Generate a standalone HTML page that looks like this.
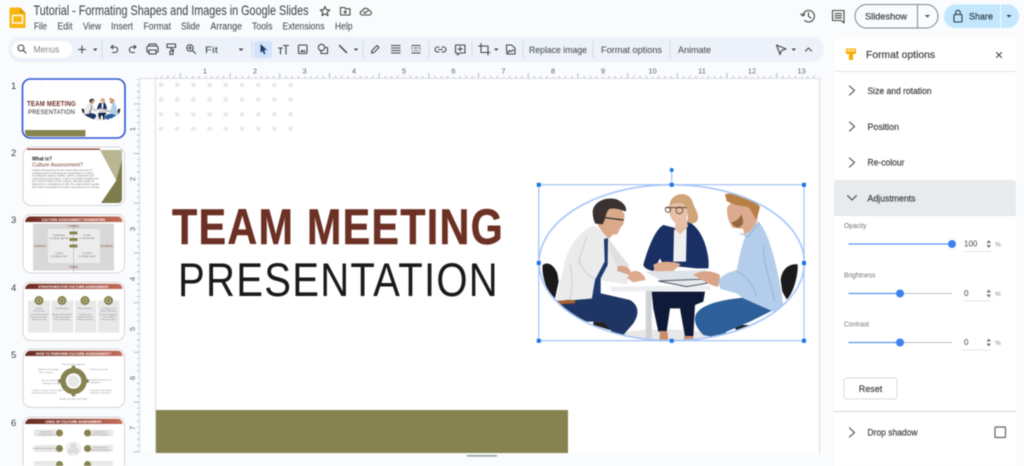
<!DOCTYPE html>
<html><head><meta charset="utf-8"><title>Tutorial - Formating Shapes and Images in Google Slides</title>
<style>
html,body{margin:0;padding:0;width:1024px;height:466px;overflow:hidden;background:#f9fbfd}
svg{display:block;font-family:"Liberation Sans",sans-serif;filter:blur(.4px)}
.t{fill:#3c4043}
.m{stroke:#3c4043;stroke-width:.18;fill:#3c4043}
.i{fill:none;stroke:#444746;stroke-width:1.1;stroke-linecap:round;stroke-linejoin:round}
.d{stroke:#d5d9df;stroke-width:1}
.ar{fill:#444746}
.s{font-size:2.5px;fill:#777}
</style></head><body>
<svg width="1024" height="466" viewBox="0 0 1024 466" xmlns="http://www.w3.org/2000/svg">
<defs>
<pattern id="ht" patternUnits="userSpaceOnUse" x="155.5" y="72" width="49.7" height="7">
<path d="M0 4V7M6.2 4V7M12.4 4V7M18.6 4V7M24.85 1V7M31 4V7M37.3 4V7M43.5 4V7" stroke="#9aa0a6" stroke-width=".7"/>
</pattern>
<pattern id="vt" patternUnits="userSpaceOnUse" x="133" y="79" width="7" height="49.7">
<path d="M4 0H7M4 6.2H7M4 12.4H7M4 18.6H7M1 24.85H7M4 31H7M4 37.3H7M4 43.5H7" stroke="#9aa0a6" stroke-width=".7"/>
</pattern>
<pattern id="dots" patternUnits="userSpaceOnUse" x="153" y="78" width="16.2" height="14.6"><circle cx="8" cy="7" r="2.4" fill="#e9e9e9"/></pattern>
<pattern id="dots2" patternUnits="userSpaceOnUse" x="27" y="80" width="3" height="3"><circle cx="1.5" cy="1.5" r=".5" fill="#eee"/></pattern>
<linearGradient id="hd"><stop offset="0" stop-color="#6b2b20"/><stop offset="1" stop-color="#c46f5c"/></linearGradient>
<clipPath id="ov"><ellipse cx="425" cy="293" rx="398" ry="234"/></clipPath>
<g id="people">
<g clip-path="url(#ov)">
<ellipse cx="400" cy="515" rx="150" ry="22" fill="#e8e8e8"/>
<!-- chairs -->
<path d="M38 300C50 290 70 295 82 325L86 350L75 400L55 380C42 350 35 320 38 300Z" fill="#1a1a1c"/>
<path d="M752 345C755 310 780 295 803 298C805 330 790 385 770 403L757 380Z" fill="#1a1a1c"/>
<path d="M190 470H240V495L190 480ZM610 480H680L620 498Z" fill="#222"/>
<!-- woman legs -->
<path d="M365 380L525 380L520 410L495 420L490 515L465 515L450 430L420 430L410 500L385 500L370 430Z" fill="#0f1a38"/>
<path d="M390 498L412 498L415 528L388 528ZM462 513L490 513L492 528L462 528Z" fill="#c98f6c"/>
<path d="M347 378H365V526H347Z" fill="#cfd2d5"/>
<!-- left man -->
<path d="M85 412C120 400 160 400 190 380L300 405C325 420 330 445 310 475L280 510L250 505L220 470L170 470C130 450 100 430 85 412Z" fill="#1f3563"/>
<path d="M80 407L135 405L135 415L82 418Z" fill="#a5622f"/>
<path d="M200 140C197 165 205 190 215 196L212 205L235 222L250 208L262 208C268 195 272 185 280 178L284 150L270 125Z" fill="#d9a98a"/>
<path d="M192 182C150 195 110 250 100 310L78 405L135 405L190 400L205 345L290 358L300 320L262 305L240 225L212 196Z" fill="#ebebec"/>
<path d="M238 222C255 250 285 285 300 305L265 312L240 260Z" fill="#e0e0e2"/>
<path d="M120 300C130 340 125 380 120 405M205 345C175 335 160 320 150 290M170 215C160 250 150 270 145 300" fill="none" stroke="#cfcfd1" stroke-width="3"/>
<path d="M222 222L234 219L233 300L212 340L212 395L185 405L195 345L224 290Z" fill="#1e3a6e"/>
<path d="M262 305C280 298 300 308 302 320L298 330L262 318Z" fill="#d8a488"/>
<path d="M298 325C320 305 345 330 347 345L310 352L292 340Z" fill="#dcab8f"/>
<path d="M188 140C190 112 225 94 260 103C282 112 292 128 287 140C270 132 250 128 238 132C228 138 228 160 218 178L196 176C190 165 188 150 188 140Z" fill="#3a3230"/>
<path d="M225 158L281 165" stroke="#2a2a2a" stroke-width="3.500" fill="none"/>
<!-- woman -->
<path d="M400 180C370 195 345 280 340 300C345 315 370 318 370 318L390 280L400 300L500 310L535 310C540 280 525 195 475 170L440 190Z" fill="#1a2f63"/>
<path d="M432 195L470 190L468 290L430 290Z" fill="#efefef"/>
<path d="M370 300C390 285 440 290 452 298L430 318L375 322Z" fill="#dcab8f"/>
<path d="M438 168L470 160L474 185L450 208L434 192Z" fill="#e6bfa6"/>
<path d="M416 122C414 150 430 180 452 180C470 172 478 140 472 112L430 108Z" fill="#e8c0a8"/>
<path d="M420 112C430 82 475 78 487 108C490 125 506 140 504 162C498 178 480 178 472 170C476 150 472 125 462 118C450 110 432 112 420 122Z" fill="#cfa478"/>
<path d="M406 128H470" stroke="#5a4032" stroke-width="3" fill="none"/><circle cx="414" cy="134" r="8" fill="none" stroke="#5a4032" stroke-width="2.500"/><circle cx="448" cy="136" r="10" fill="none" stroke="#5a4032" stroke-width="2.500"/>
<!-- table -->
<path d="M240 365L540 362L540 375L245 380Z" fill="#eceef0"/>
<path d="M345 320L530 315L500 340L400 350Z" fill="#dfe3ea"/>
<path d="M385 348L525 342L530 355L470 365Z" fill="#e6e8ec" stroke="#4c5262" stroke-width="3"/>
<!-- right man -->
<path d="M497 450C510 420 570 405 640 398L700 410L730 435L660 470L590 500L570 520L520 510C500 490 490 470 497 450Z" fill="#2d5f9a"/>
<path d="M655 195C640 215 625 290 620 315L590 325L562 345L572 372L620 385L640 400L730 440L760 425C750 340 720 200 685 170Z" fill="#b3cdea"/>
<path d="M620 320C650 330 670 360 680 395M700 240C700 290 720 350 735 410M630 205L655 215L688 172" fill="none" stroke="#96b4d8" stroke-width="3"/>
<path d="M490 330C510 315 545 315 570 330L565 365C545 365 510 340 490 330Z" fill="#d8a488"/>
<path d="M592 125C588 150 598 175 608 188L640 192L642 210L665 195L682 168L680 130L620 100Z" fill="#dcab8f"/>
<path d="M604 172C615 192 635 194 640 170L635 148C628 160 618 170 604 172Z" fill="#95693c"/>
<path d="M585 88C610 80 665 95 690 125L680 165C668 150 664 130 650 125C625 122 605 118 590 108Z" fill="#b98045"/>
</g></g>
</defs>

<rect width="1024" height="466" fill="#f9fbfd"/>

<!-- app header -->
<path d="M11 7.5H20L25.5 13V26.5Q25.5 28 24 28H11Q9.5 28 9.5 26.5V9Q9.5 7.5 11 7.5Z" fill="#f6b50f"/>
<path d="M20 7.5V13H25.5Z" fill="#d99a05"/>
<rect x="12.5" y="15.5" width="10" height="7.5" fill="none" stroke="#fff" stroke-width="1.4"/>
<text x="33.5" y="15" font-size="14" class="t" textLength="275" lengthAdjust="spacingAndGlyphs">Tutorial - Formating Shapes and Images in Google Slides</text>
<path class="i" d="M325 6.5L326.4 9.7L329.8 10L327.2 12.2L328 15.6L325 13.8L322 15.6L322.8 12.2L320.2 10L323.6 9.7Z"/>
<path class="i" d="M340.5 7.5H344.5L345.5 8.8H350V15H340.5ZM345.2 10.5V13.5M343.7 12H346.7" stroke-width=".9"/>
<path class="i" d="M362.5 15H369C372 15 372 11 369 10.7C368 7.5 363.5 7.5 362.8 10.5C359.5 10.7 359.5 15 362.5 15ZM363.5 12L365 13.3L367.5 10.8" stroke-width=".9"/>
<g font-size="10" class="t">
<text x="34" y="29.5" textLength="13" lengthAdjust="spacingAndGlyphs">File</text>
<text x="57.5" y="29.5" textLength="15" lengthAdjust="spacingAndGlyphs">Edit</text>
<text x="83" y="29.5" textLength="18" lengthAdjust="spacingAndGlyphs">View</text>
<text x="111" y="29.5" textLength="22" lengthAdjust="spacingAndGlyphs">Insert</text>
<text x="143.5" y="29.5" textLength="27.5" lengthAdjust="spacingAndGlyphs">Format</text>
<text x="181" y="29.5" textLength="19" lengthAdjust="spacingAndGlyphs">Slide</text>
<text x="210.5" y="29.5" textLength="31.5" lengthAdjust="spacingAndGlyphs">Arrange</text>
<text x="252" y="29.5" textLength="20.5" lengthAdjust="spacingAndGlyphs">Tools</text>
<text x="282.5" y="29.5" textLength="42" lengthAdjust="spacingAndGlyphs">Extensions</text>
<text x="335" y="29.5" textLength="17.5" lengthAdjust="spacingAndGlyphs">Help</text>
</g>

<!-- right header -->
<path class="i" d="M802.8 16A5.8 5.8 0 1 1 804.6 20.4M802.8 16L800.8 14M802.8 16L804.8 14.2M808.5 12.5V16.3L811 18" stroke-width="1.2"/>
<path class="i" d="M832.5 10.5H844V23L841 20.5H832.5ZM835 13.5H841.5M835 15.7H841.5M835 17.9H841.5" stroke-width="1.1"/>
<rect x="855" y="4.5" width="83" height="23.5" rx="11.7" fill="#f9fbfd" stroke="#80868b" stroke-width="1"/>
<path d="M917.5 4.5V28" stroke="#80868b"/>
<text x="865" y="19.5" font-size="9.5" class="m" textLength="42" lengthAdjust="spacingAndGlyphs">Slideshow</text>
<path class="ar" d="M925 15H930L927.5 17.5Z"/>
<rect x="944" y="4.5" width="75" height="23.5" rx="11.7" fill="#c2e7ff"/>
<path d="M1000.5 4.5V28" stroke="#f9fbfd"/>
<rect x="954" y="14.5" width="8" height="7.5" rx="1" fill="none" stroke="#2a3a44" stroke-width="1.1"/>
<path d="M955.8 14.5V12.5A2.2 2.2 0 0 1 960.2 12.5V14.5" fill="none" stroke="#2a3a44" stroke-width="1.1"/>
<text x="969" y="19.5" font-size="9.5" fill="#2a3a44" stroke="#2a3a44" stroke-width=".2" textLength="24" lengthAdjust="spacingAndGlyphs">Share</text>
<path d="M1006.5 15H1011.5L1009 17.5Z" fill="#2a3a44"/>

<!-- toolbar -->
<rect x="8" y="37" width="816" height="25" rx="12.5" fill="#edf2fa"/>
<rect x="12" y="41" width="60" height="17" rx="8.5" fill="#fff"/>
<circle cx="21" cy="48" r="3" class="i"/><path class="i" d="M23.3 50.3L26 53"/>
<text x="33.5" y="52.7" font-size="9" fill="#80868b" textLength="26" lengthAdjust="spacingAndGlyphs">Menus</text>
<path class="i" d="M82 46V53M78.500 49.500H85.500" stroke-width="1.300"/>
<path class="ar" d="M93 48.5H97.5L95.2 51Z"/>
<path class="d" d="M102 41V58M252 41V58M363 41V58M429 41V58M472 41V58M523 41V58M593 41V58M670 41V58"/>
<path class="i" d="M111 47L113 45.300M111 47L113 48.700M111 47H115C118.500 47 118.500 52.500 115 52.500H112.500"/>
<path class="i" d="M136 47L134 45.300M136 47L134 48.700M136 47H132C128.500 47 128.500 52.500 132 52.500H134.500"/>
<path class="i" d="M149 46V44H156V46M149 52H147V47.500Q147 46 148.500 46H156.500Q158 46 158 47.500V52H156M149 50H156V54H149Z"/>
<path class="i" d="M167 44H175.500V47.500H167ZM171 47.500V49.500H173.500V51H171.500M170 51H173V54.500H170Z" stroke-width="1"/>
<circle cx="190" cy="48" r="3.2" class="i"/><path class="i" d="M192.500 50.500L195.500 53.500M188.700 48H191.300M190 46.700V49.300"/>
<text x="205" y="53" font-size="9.5" class="t" textLength="13" lengthAdjust="spacingAndGlyphs">Fit</text>
<path class="ar" d="M238.5 48.5H243.5L241 51Z"/>
<rect x="254" y="41" width="18" height="17" rx="3" fill="#d3e3fd"/>
<path d="M260.5 44L267 50L264 50.300L265.500 53.700L264 54.300L262.500 51L260.5 53Z" fill="#1f3a66"/>
<path class="i" d="M278.500 48H282.500M280.500 48V54M283.500 45.500H288.500M286 45.500V54" stroke-width="1.1"/>
<rect x="298.500" y="45" width="8.500" height="8.500" rx="1" class="i"/><path d="M300 52L302 49.500L303.500 51L304.500 50L306 52Z" fill="#444746"/>
<circle cx="321.5" cy="47.5" r="3.2" class="i"/><path class="i" d="M325 47.500H327.500V53.500H321V51"/>
<path d="M339.500 45.500L346.500 52.500" stroke="#444746" stroke-width="1.500" stroke-linecap="round"/>
<path class="ar" d="M353.7 48.5H358.2L356 51Z"/>
<path class="i" d="M371.5 53L372 50.5L377 45.500L379 47.500L374 52.500Z" stroke-width="1"/>
<path d="M391 45.500H400.500M391 48H400.500M391 50.500H400.500M391 53H400.500" stroke="#444746" stroke-width="1"/>
<path d="M411.500 45.500H420.500M411.500 48H413M414.500 48H417M418.500 48H420.500M411.500 50.500H412.500M414 50.500H415.500M416.500 50.500H418M419.500 50.500H420.500M411.500 53H420.500" stroke="#444746" stroke-width=".9"/>
<path class="i" d="M439 47H437.500A2.500 2.500 0 0 0 437.500 52H439M442 47H443.500A2.500 2.500 0 0 1 443.500 52H442M438.500 49.500H442.500" stroke-width=".9"/>
<path class="i" d="M455.500 45H465V53H460L457.500 55V53H455.500ZM460.200 46.800V51M458 49H462.500" stroke-width=".9"/>
<path class="i" d="M481 43.500V52.500H490M478.500 46H488V55"/>
<path class="ar" d="M494 48.5H498.5L496.2 51Z"/>
<path class="i" d="M506.500 49V45H511.500L515 48V54H507ZM508 52.500L509.500 50.500L511 51.500L513.500 50" stroke-width=".9"/>
<g font-size="9" class="t">
<text x="529" y="52.8" textLength="58" lengthAdjust="spacingAndGlyphs">Replace image</text>
<text x="601" y="52.8" textLength="61" lengthAdjust="spacingAndGlyphs">Format options</text>
<text x="678" y="52.8" textLength="33" lengthAdjust="spacingAndGlyphs">Animate</text>
</g>
<path class="i" d="M776.5 45L786 49L781.5 50.5L780 54.5Z"/>
<path class="ar" d="M791.5 48.5H796L793.7 51Z"/>
<path class="i" d="M805.5 51L808.5 48L811.5 51"/>

<!-- rulers -->
<rect x="155.500" y="72" width="663" height="7" fill="url(#ht)"/>
<rect x="133" y="79" width="7" height="374" fill="url(#vt)"/>
<rect x="139" y="78.500" width="17" height="374.500" fill="#fcfdfe"/>
<g font-size="7.5" fill="#5f6368" text-anchor="middle">
<text x="205" y="73.500">1</text><text x="255" y="73.500">2</text><text x="304.500" y="73.500">3</text><text x="354" y="73.500">4</text><text x="404" y="73.500">5</text><text x="453.500" y="73.500">6</text><text x="503.500" y="73.500">7</text><text x="553" y="73.500">8</text><text x="603" y="73.500">9</text><text x="652.500" y="73.500">10</text><text x="702" y="73.500">11</text><text x="752" y="73.500">12</text><text x="801.500" y="73.500">13</text>
<text transform="translate(135,129) rotate(-90)">1</text><text transform="translate(135,179) rotate(-90)">2</text><text transform="translate(135,229) rotate(-90)">3</text><text transform="translate(135,279) rotate(-90)">4</text><text transform="translate(135,329) rotate(-90)">5</text><text transform="translate(135,378) rotate(-90)">6</text><text transform="translate(135,428) rotate(-90)">7</text>
</g>

<!-- slide canvas -->
<rect x="156" y="79" width="664" height="374" fill="#fff"/>
<path d="M139 78.500H819.500V453M139.500 78.500V453M155.500 79V453" stroke="#dadce0" fill="none" stroke-width="1"/>
<rect x="153" y="78" width="145.8" height="58.4" fill="url(#dots)"/>
<text x="172" y="244" font-size="50" font-weight="bold" letter-spacing="1.500" fill="#6c3024" stroke="#6c3024" stroke-width=".4" textLength="332" lengthAdjust="spacingAndGlyphs">TEAM MEETING</text>
<text x="178" y="296" font-size="47.500" letter-spacing="1.500" fill="#1a1a1a" textLength="321" lengthAdjust="spacingAndGlyphs">PRESENTATION</text>
<rect x="156" y="410" width="412" height="43" fill="#878350"/>
<rect x="467" y="455" width="30" height="1.6" fill="#9aa0a6"/>

<g transform="translate(530,165) scale(.33333)">
<use href="#people"/>
<ellipse cx="425" cy="293" rx="398" ry="234" fill="none" stroke="#a8c7fa" stroke-width="5"/>
</g>
<rect x="538.7" y="184.7" width="265.3" height="156" fill="none" stroke="#a3c2f5" stroke-width="1.2"/>
<path d="M671.7 170V184.7" stroke="#a3c2f5" stroke-width="1.2"/>
<circle cx="671.7" cy="170" r="2" fill="#1a73e8"/>
<g fill="#1a73e8">
<rect x="536.8" y="182.8" width="4" height="4"/><rect x="669.7" y="182.8" width="4" height="4"/><rect x="802" y="182.8" width="4" height="4"/>
<rect x="536.8" y="261" width="4" height="4"/><rect x="802" y="261" width="4" height="4"/>
<rect x="536.8" y="338.8" width="4" height="4"/><rect x="669.7" y="338.8" width="4" height="4"/><rect x="802" y="338.8" width="4" height="4"/>
</g>

<!-- filmstrip -->
<g font-size="9.5" fill="#3c4043">
<text x="11" y="89">1</text><text x="11" y="156">2</text><text x="11" y="223">3</text><text x="11" y="291">4</text><text x="11" y="358">5</text><text x="11" y="426">6</text>
</g>
<clipPath id="fc"><rect x="0" y="0" width="130" height="466"/></clipPath>
<g clip-path="url(#fc)">
<rect x="23" y="147" width="101.500" height="58.500" rx="8" fill="#fff" stroke="#d5d7da"/>
<rect x="23" y="214.500" width="101.500" height="58.500" rx="8" fill="#fff" stroke="#d5d7da"/>
<rect x="23" y="282" width="101.500" height="58.500" rx="8" fill="#fff" stroke="#d5d7da"/>
<rect x="23" y="349" width="101.500" height="58.500" rx="8" fill="#fff" stroke="#d5d7da"/>
<rect x="23" y="417" width="101.500" height="70" rx="8" fill="#fff" stroke="#d5d7da"/>

<!-- 1 -->
<rect x="22.500" y="79" width="102.500" height="59" rx="8" fill="#fff" stroke="#2f55d4" stroke-width="1.6"/>
<rect x="27" y="80.500" width="18" height="12" fill="url(#dots2)"/>
<text x="27" y="106" font-size="7" font-weight="bold" letter-spacing=".2" fill="#6c3024" textLength="49" lengthAdjust="spacingAndGlyphs">TEAM MEETING</text>
<text x="28" y="114" font-size="6.800" letter-spacing=".2" fill="#2a2a2a" textLength="47" lengthAdjust="spacingAndGlyphs">PRESENTATION</text>
<g transform="translate(80,93.750) scale(.05)"><use href="#people"/></g>
<path d="M25 130H85.500V136.500H30Q25 136.500 25 132Z" fill="#878350"/>

<!-- 2 -->
<rect x="27" y="148.500" width="73" height="1.300" fill="#8a3d2e"/>
<path d="M100 150H122V176L116 180Z" fill="#b8b693"/>
<path d="M101 203L116 181L122 160V198Q122 203 118 203Z" fill="#7d7c4c"/>
<text x="32" y="160.500" font-size="5" font-weight="bold" fill="#222" textLength="20" lengthAdjust="spacingAndGlyphs">What is?</text>
<text x="32" y="166.500" font-size="5" fill="#7a4537" textLength="51" lengthAdjust="spacingAndGlyphs">Culture Assessment?</text>
<g class="s">
<text x="32" y="171" textLength="60" lengthAdjust="spacingAndGlyphs">Culture Assessment is the systematic process of</text>
<text x="32" y="173.800" textLength="62" lengthAdjust="spacingAndGlyphs">evaluating and measuring an organization's culture,</text>
<text x="32" y="176.600" textLength="62" lengthAdjust="spacingAndGlyphs">including its values, beliefs, norms, behaviors and</text>
<text x="32" y="179.400" textLength="67" lengthAdjust="spacingAndGlyphs">underlying assumptions. It aims to provide insights into</text>
<text x="32" y="182.200" textLength="62" lengthAdjust="spacingAndGlyphs">the current state of the culture, identify areas of</text>
<text x="32" y="185" textLength="68" lengthAdjust="spacingAndGlyphs">alignment or misalignment with the organization's goals,</text>
<text x="32" y="187.800" textLength="68" lengthAdjust="spacingAndGlyphs">and inform strategies for culture improvement or change.</text>
</g>
<rect x="27" y="194" width="18" height="9" fill="url(#dots2)"/>

<!-- 3 -->
<path d="M25 222Q26 217 30 216.500H118Q122 217 122.500 222Z" fill="url(#hd)"/>
<text x="73.500" y="221" font-size="3.400" font-weight="bold" fill="#fff" text-anchor="middle">CULTURE ASSESSMENT FRAMEWORK</text>
<rect x="33" y="223.500" width="81" height="47" fill="#d8d8d8"/>
<rect x="48" y="229" width="52" height="34" fill="#ececec"/>
<path d="M73.500 224V273" stroke="#999" stroke-width=".4"/>
<rect x="69.500" y="231.500" width="8" height="3" fill="#878350"/><rect x="69.500" y="238" width="8" height="3" fill="#878350"/><rect x="69.500" y="244.500" width="8" height="3" fill="#878350"/>
<g font-size="2.400" fill="#777" text-anchor="middle">
<text x="59" y="236">Collaborate</text><text x="59" y="239">to change agenda</text>
<text x="87" y="236">Create</text><text x="87" y="239">to change plan</text>
<text x="59" y="254">Control</text><text x="59" y="257">to change rules</text>
<text x="87" y="254">Compete</text><text x="87" y="257">to change goals</text>
<text x="73.500" y="227" fill="#8a3d2e">FLEXIBLE</text><text x="40" y="247" fill="#8a3d2e">INTERNAL</text><text x="107" y="247" fill="#8a3d2e">EXTERNAL</text><text x="73.500" y="268" fill="#8a3d2e">STABLE</text>
</g>

<!-- 4 -->
<path d="M25 289Q26 284 30 283.700H118Q122 284 122.500 289Z" fill="url(#hd)"/>
<text x="73.500" y="288" font-size="3.400" font-weight="bold" fill="#fff" text-anchor="middle">STRATEGIES FOR CULTURE ASSESSMENT</text>
<g fill="#e8e8e8"><rect x="28" y="300.500" width="22" height="32"/><rect x="51.500" y="300.500" width="22" height="32"/><rect x="75" y="300.500" width="21.500" height="32"/><rect x="98" y="300.500" width="21.500" height="32"/></g>
<g fill="#878350"><circle cx="39" cy="300.500" r="4.500"/><circle cx="62" cy="300.500" r="4.500"/><circle cx="85" cy="300.500" r="4.500"/><circle cx="108.500" cy="300.500" r="4.500"/></g>
<g fill="none" stroke="#e4e3cf" stroke-width=".6"><circle cx="39" cy="300.500" r="2"/><circle cx="62" cy="300.500" r="2"/><circle cx="85" cy="300.500" r="2"/><circle cx="108.500" cy="300.500" r="2"/></g>
<g font-size="2.200" fill="#777" text-anchor="middle">
<text x="39" y="309">Survey</text><text x="39" y="311.500">Instruments</text><text x="39" y="315">Use well-designed</text><text x="39" y="317.500">surveys to gather</text><text x="39" y="320">data from staff</text>
<text x="62" y="309">Data Analysis</text><text x="62" y="315">Analyse data trends</text><text x="62" y="317.500">to identify patterns</text><text x="62" y="320">and culture gaps</text>
<text x="85" y="309">Benchmarking</text><text x="85" y="315">Compare your</text><text x="85" y="317.500">culture with peers</text><text x="85" y="320">and best practice</text>
<text x="108.500" y="309">Feedback and</text><text x="108.500" y="311.500">Action Planning</text><text x="108.500" y="315">Involve employees</text><text x="108.500" y="317.500">in the feedback</text><text x="108.500" y="320">and action plans</text>
</g>

<!-- 5 -->
<path d="M25 356Q26 351 30 350.700H118Q122 351 122.500 356Z" fill="url(#hd)"/>
<text x="73.500" y="355" font-size="3.400" font-weight="bold" fill="#fff" text-anchor="middle">HOW TO PERFORM CULTURE ASSESSMENT?</text>
<circle cx="73.500" cy="381" r="10.500" fill="none" stroke="#878350" stroke-width="5.500"/>
<circle cx="73.500" cy="381" r="6" fill="#e8e8e8"/>
<g fill="#878350"><circle cx="73.500" cy="367.500" r="2"/><circle cx="73.500" cy="394.500" r="2"/><circle cx="60" cy="381" r="2"/><circle cx="87" cy="381" r="2"/></g>
<g font-size="2.200" fill="#777">
<text x="73.500" y="365" text-anchor="middle">Determine the objective</text>
<text x="73.500" y="399.500" text-anchor="middle">Analyse the data and results</text>
<text x="38.500" y="370">Monitor and manage</text><text x="38.500" y="373">future changes</text>
<text x="42" y="381">Act on results of the</text><text x="42" y="384">employees change needs</text>
<text x="31.500" y="391">Create a survey or tool to collect</text><text x="31.500" y="393.500">and measure assessment</text>
<text x="90" y="370">Choose your tools</text>
<text x="90" y="380.500">Explain the process to</text><text x="90" y="383">employees</text>
<text x="90" y="391">Determine key cultural</text><text x="90" y="393.500">indicators to measure</text>
</g>

<!-- 6 -->
<path d="M25 424Q26 419 30 418.700H118Q122 419 122.500 424Z" fill="url(#hd)"/>
<text x="73.500" y="423" font-size="3.400" font-weight="bold" fill="#fff" text-anchor="middle">USES OF CULTURE ASSESSMENT</text>
<g fill="#e8e8e8"><rect x="34" y="429.500" width="26" height="7" rx="1"/><rect x="34" y="445" width="26" height="7" rx="1"/><rect x="34" y="461" width="26" height="7" rx="1"/><rect x="87" y="429.500" width="26" height="7" rx="1"/><rect x="87" y="445" width="26" height="7" rx="1"/><rect x="87" y="461" width="26" height="7" rx="1"/></g>
<g fill="#878350"><circle cx="59.500" cy="433" r="3.500"/><circle cx="59.500" cy="448.500" r="3.500"/><circle cx="59.500" cy="464.500" r="3.500"/><circle cx="87.500" cy="433" r="3.500"/><circle cx="87.500" cy="448.500" r="3.500"/><circle cx="87.500" cy="464.500" r="3.500"/></g>
<circle cx="73.500" cy="449" r="7.500" fill="#eeeeee"/>
<g fill="none" stroke="#aaa" stroke-width=".6"><circle cx="73.500" cy="446" r="1.800"/><circle cx="70.800" cy="451" r="1.800"/><circle cx="76.200" cy="451" r="1.800"/></g>
<g font-size="2.200" fill="#777" text-anchor="middle">
<text x="47" y="432.500">Education &amp;</text><text x="47" y="435">Training Programs</text>
<text x="47" y="449">Leadership and Team Services</text>
<text x="100" y="432.500">Competencies</text><text x="100" y="435">and Development</text>
<text x="100" y="448">Organisational</text><text x="100" y="450.500">Culture Development</text>
</g>
</g>

<!-- side panel -->
<path d="M834 44Q834 38 840 38H1010Q1016 38 1016 44V466H834Z" fill="#fff"/>
<path d="M834 71.500H1016" stroke="#e3e5e8" stroke-width="1"/>
<path d="M846 48.500H856V54H853V60H849V54H846Z" fill="#f9ab00"/>
<rect x="847" y="49.500" width="8" height="2" fill="#fde293"/>
<text x="866" y="58" font-size="10.500" class="m" textLength="69" lengthAdjust="spacingAndGlyphs">Format options</text>
<path class="i" d="M996.500 52.500L1001.500 57.500M1001.500 52.500L996.500 57.500" stroke-width="1"/>

<g class="i" stroke-width="1.300"><path d="M849.500 86L854.500 90.500L849.500 95"/><path d="M849.500 122L854.500 126.500L849.500 131"/><path d="M849.500 158L854.500 162.500L849.500 167"/></g>
<g font-size="8.800" fill="#3c4043" stroke="#3c4043" stroke-width=".18">
<text x="867.500" y="94" textLength="64" lengthAdjust="spacingAndGlyphs">Size and rotation</text>
<text x="867.500" y="130" textLength="31.500" lengthAdjust="spacingAndGlyphs">Position</text>
<text x="867.500" y="165.500" textLength="37" lengthAdjust="spacingAndGlyphs">Re-colour</text>
</g>
<path d="M834 184Q834 180 838 180H1012Q1016 180 1016 184V216H834Z" fill="#e8eaed"/>
<path class="i" d="M847.500 195.500L852 200L856.500 195.500" stroke-width="1.300"/>
<text x="867.500" y="201.500" font-size="8.800" fill="#3c4043" stroke="#3c4043" stroke-width=".18" textLength="48" lengthAdjust="spacingAndGlyphs">Adjustments</text>

<g font-size="7.500" fill="#70757a">
<text x="844" y="228" textLength="22.500" lengthAdjust="spacingAndGlyphs">Opacity</text>
<text x="844" y="277.500" textLength="31.500" lengthAdjust="spacingAndGlyphs">Brightness</text>
<text x="844" y="326.500" textLength="25" lengthAdjust="spacingAndGlyphs">Contrast</text>
</g>
<path d="M848.500 244H952" stroke="#3b82f0" stroke-width="1"/>
<circle cx="952" cy="244" r="4" fill="#3b82f0"/>
<path d="M900 293.500H952M900 342.500H952" stroke="#bdc1c6" stroke-width="1"/>
<path d="M848.500 293.500H900M848.500 342.500H900" stroke="#3b82f0" stroke-width="1"/>
<circle cx="900" cy="293.500" r="4" fill="#3b82f0"/><circle cx="900" cy="342.500" r="4" fill="#3b82f0"/>
<g font-size="8" fill="#444746">
<text x="964" y="246.500">100</text><text x="964" y="296">0</text><text x="964" y="345">0</text>
</g>
<path d="M963 251.500H991M963 301H991M963 350H991" stroke="#e3e5e8" stroke-width="1"/>
<g fill="#70757a">
<path d="M986.500 243L988.700 240L991 243ZM986.500 245L988.700 248L991 245Z"/>
<path d="M986.500 292.500L988.700 289.500L991 292.500ZM986.500 294.500L988.700 297.500L991 294.500Z"/>
<path d="M986.500 341.500L988.700 338.500L991 341.500ZM986.500 343.500L988.700 346.500L991 343.500Z"/>
</g>
<g font-size="6.500" fill="#80868b"><text x="995" y="246.500">%</text><text x="995" y="296">%</text><text x="995" y="345">%</text></g>
<rect x="844" y="378" width="53" height="21" rx="3" fill="#fff" stroke="#dadce0"/>
<text x="870.500" y="392" font-size="9" text-anchor="middle" fill="#3c4043" stroke="#3c4043" stroke-width=".15">Reset</text>

<path d="M834 411.500H1016" stroke="#dfe1e5" stroke-width="1.500"/>
<rect x="834" y="413" width="182" height="53" fill="#fff"/>
<path class="i" d="M849.500 428L854.500 432.500L849.500 437" stroke-width="1.300"/>
<text x="867.500" y="435.500" font-size="8.800" fill="#3c4043" stroke="#3c4043" stroke-width=".18" textLength="50" lengthAdjust="spacingAndGlyphs">Drop shadow</text>
<rect x="995" y="427" width="10.500" height="10.500" rx="1" fill="#fff" stroke="#5f6368" stroke-width="1.200"/>
</svg>
</body></html>
